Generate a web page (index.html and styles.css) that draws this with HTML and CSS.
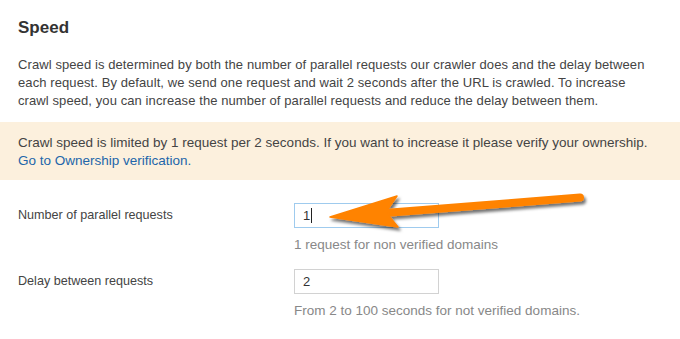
FILE: index.html
```html
<!DOCTYPE html>
<html>
<head>
<meta charset="utf-8">
<link rel="stylesheet" href="styles.css">
</head>
<body>
<div class="page">
  <section class="intro">
    <h2 class="title">Speed</h2>
    <p class="desc">Crawl speed is determined by both the number of parallel requests our crawler does and the delay between each request. By default, we send one request and wait 2 seconds after the URL is crawled. To increase crawl speed, you can increase the number of parallel requests and reduce the delay between them.</p>
  </section>
  <div class="notice">
    Crawl speed is limited by 1 request per 2 seconds. If you want to increase it please verify your ownership.<br>
    <a class="link" href="#">Go to Ownership verification.</a>
  </div>
  <div class="form">
    <div class="row">
      <label class="label">Number of parallel requests</label>
      <div class="field">
        <div class="input focused"><span>1</span><span class="caret"></span></div>
        <div class="help">1 request for non verified domains</div>
      </div>
    </div>
    <div class="row">
      <label class="label">Delay between requests</label>
      <div class="field">
        <div class="input"><span>2</span></div>
        <div class="help">From 2 to 100 seconds for not verified domains.</div>
      </div>
    </div>
  </div>
  <svg class="arrow" width="680" height="339" viewBox="0 0 680 339">
    <defs>
      <filter id="sh" x="-20%" y="-50%" width="140%" height="200%">
        <feDropShadow dx="2" dy="3" stdDeviation="1.8" flood-color="#000" flood-opacity="0.55"/>
      </filter>
    </defs>
    <g filter="url(#sh)">
      <line x1="391" y1="212.5" x2="580" y2="197.5" stroke="#ff8300" stroke-width="8" stroke-linecap="round"/>
      <polygon points="330,217 397,196 388,209 389,216 398,227" fill="#ff8300" stroke="#ff8300" stroke-width="1.5" stroke-linejoin="round"/>
    </g>
  </svg>
</div>
</body>
</html>
```
FILE: styles.css
```css
html, body {
  margin: 0;
  padding: 0;
  background: #fff;
}
.page {
  position: relative;
  width: 680px;
  height: 339px;
  overflow: hidden;
  font-family: "Liberation Sans", Arial, sans-serif;
  font-size: 13px;
  color: #444;
}
.intro {
  padding: 18px 18px 0 18px;
}
.title {
  margin: 0;
  font-size: 17px;
  line-height: 20px;
  font-weight: bold;
  color: #333;
}
.desc {
  margin: 18px 0 0 0;
  line-height: 18px;
  padding-right: 4px;
  letter-spacing: 0.09px;
}
.notice {
  margin-top: 12px;
  background: #fcf0dd;
  padding: 12px 18px 10px 18px;
  line-height: 18px;
  font-size: 13.5px;
}
.link {
  color: #2266aa;
  text-decoration: none;
}
.form {
  margin-top: 23px;
  padding: 0 18px;
  display: flex;
  flex-direction: column;
  gap: 15px;
}
.row {
  display: grid;
  grid-template-columns: 276px 145px;
}
.label {
  height: 25px;
  line-height: 25px;
  font-size: 12.6px;
  color: #444;
}
.input {
  box-sizing: border-box;
  width: 145px;
  height: 25px;
  border: 1px solid #d2d2d2;
  padding: 0 8px;
  line-height: 23px;
  color: #333;
  display: flex;
  align-items: center;
}
.input.focused {
  border-color: #9fcbee;
}
.caret {
  display: inline-block;
  width: 1px;
  height: 15px;
  background: #222;
  margin-left: 1px;
}
.help {
  margin-top: 8px;
  line-height: 18px;
  font-size: 13.5px;
  color: #888;
  white-space: nowrap;
}
.arrow {
  position: absolute;
  left: 0;
  top: 0;
  pointer-events: none;
}
```
